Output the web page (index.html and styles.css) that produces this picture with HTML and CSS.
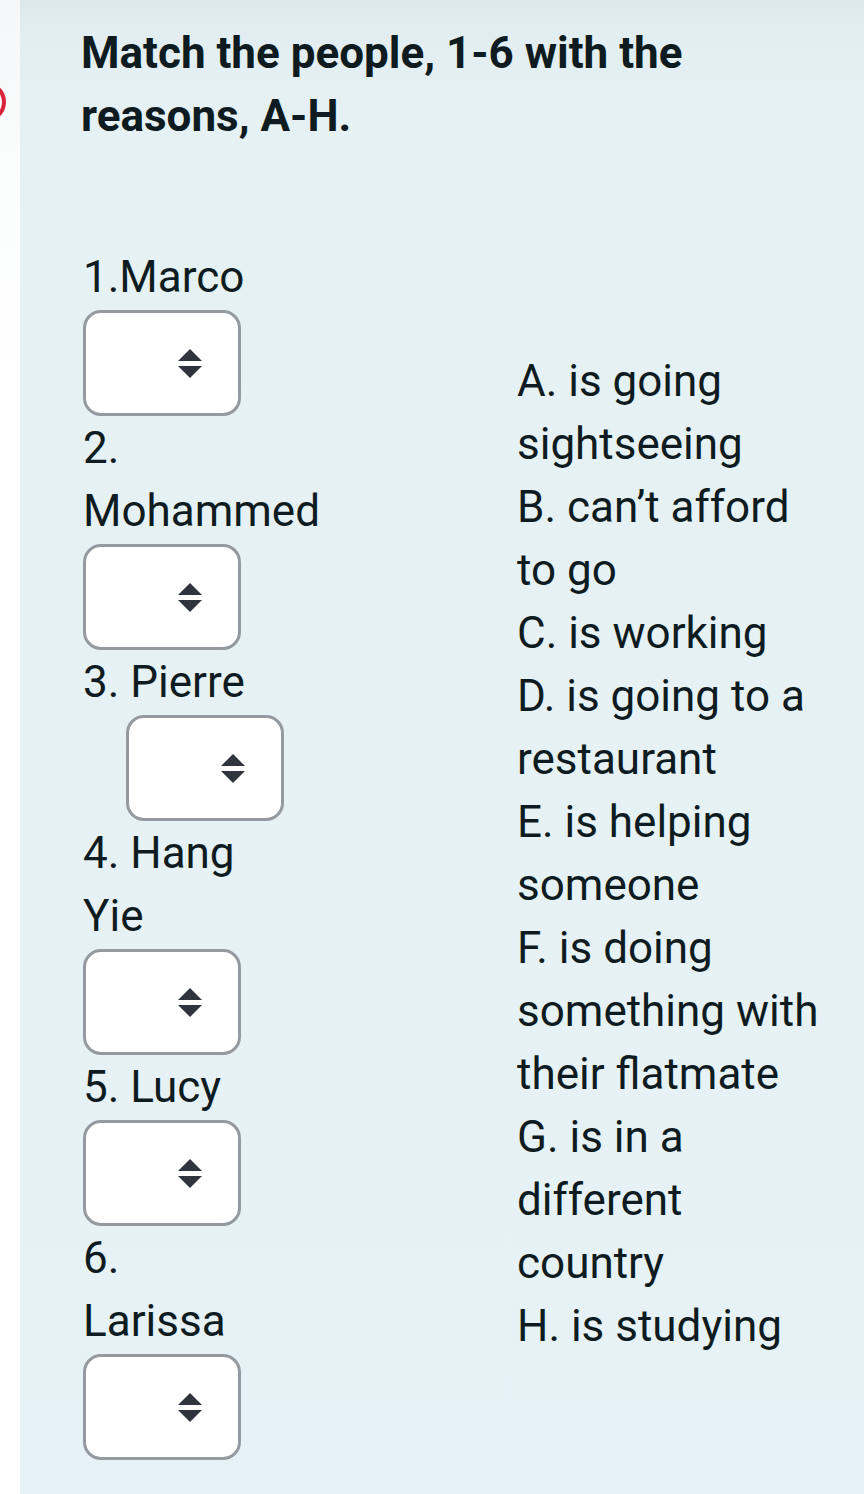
FILE: index.html
```html
<!DOCTYPE html>
<html lang="en">
<head>
<meta charset="utf-8">
<title>Match the people</title>
<link rel="stylesheet" href="styles.css">
</head>
<body>
<div class="page">
  <aside class="strip"><span class="marker"></span></aside>
  <main class="panel">
    <h1 class="title">Match the people, 1-6 with the reasons, A-H.</h1>
    <div class="match">
      <div class="people">
        <p class="line">1.Marco</p>
        <div class="select"><svg class="arrows" viewBox="0 0 24 29" width="24" height="29"><polygon points="0,12 12,0 24,12"/><polygon points="0,17 24,17 12,29"/></svg></div>
        <p class="line">2. Mohammed</p>
        <div class="select"><svg class="arrows" viewBox="0 0 24 29" width="24" height="29"><polygon points="0,12 12,0 24,12"/><polygon points="0,17 24,17 12,29"/></svg></div>
        <p class="line">3. Pierre</p>
        <div class="select indent"><svg class="arrows" viewBox="0 0 24 29" width="24" height="29"><polygon points="0,12 12,0 24,12"/><polygon points="0,17 24,17 12,29"/></svg></div>
        <p class="line">4. Hang Yie</p>
        <div class="select"><svg class="arrows" viewBox="0 0 24 29" width="24" height="29"><polygon points="0,12 12,0 24,12"/><polygon points="0,17 24,17 12,29"/></svg></div>
        <p class="line">5. Lucy</p>
        <div class="select"><svg class="arrows" viewBox="0 0 24 29" width="24" height="29"><polygon points="0,12 12,0 24,12"/><polygon points="0,17 24,17 12,29"/></svg></div>
        <p class="line">6. Larissa</p>
        <div class="select"><svg class="arrows" viewBox="0 0 24 29" width="24" height="29"><polygon points="0,12 12,0 24,12"/><polygon points="0,17 24,17 12,29"/></svg></div>
      </div>
      <div class="reasons">
        <p class="line">A. is going sightseeing</p>
        <p class="line">B. can’t afford to go</p>
        <p class="line">C. is working</p>
        <p class="line">D. is going to a restaurant</p>
        <p class="line">E. is helping someone</p>
        <p class="line">F. is doing something with their flatmate</p>
        <p class="line">G. is in a different country</p>
        <p class="line">H. is studying</p>
      </div>
    </div>
  </main>
</div>
</body>
</html>
```
FILE: styles.css
```css
html, body {
  margin: 0;
  padding: 0;
}
body {
  font-family: Roboto, "Liberation Sans", sans-serif;
  color: #0e1c21;
  background: #ffffff;
}
.page {
  display: flex;
  width: 864px;
  height: 1494px;
  overflow: hidden;
}
.strip {
  position: relative;
  width: 20px;
  flex: none;
  background: linear-gradient(to bottom, #f5f7f8 0px, #fcfdfd 200px, #ffffff 400px);
}
.marker {
  position: absolute;
  left: -34px;
  top: 82px;
  width: 32px;
  height: 32px;
  border: 4px solid #d8243a;
  border-radius: 50%;
  filter: blur(0.6px);
}
.panel {
  flex: 1;
  padding: 22px 0 0 63px;
  background: linear-gradient(to bottom, #dde9ea 0px, #e2eef1 40px, #e6f1f4 120px, #e6f2f5 100%);
}
.title {
  margin: 0 0 98px -2px;
  width: 640px;
  font-size: 44px;
  line-height: 63px;
  font-weight: 700;
}
.match {
  display: grid;
  grid-template-columns: 175px 310px;
  column-gap: 259px;
  align-items: center;
}
.line {
  margin: 0;
  font-size: 44px;
  line-height: 63px;
}
.select {
  box-sizing: border-box;
  width: 158px;
  height: 106px;
  margin: 1px 0;
  border: 3px solid #959aa1;
  border-radius: 18px;
  background: #ffffff;
  display: flex;
  align-items: center;
  justify-content: flex-end;
  padding-right: 36px;
}
.select.indent {
  margin-left: 43px;
}
.arrows {
  display: block;
  fill: #30343c;
}
```
